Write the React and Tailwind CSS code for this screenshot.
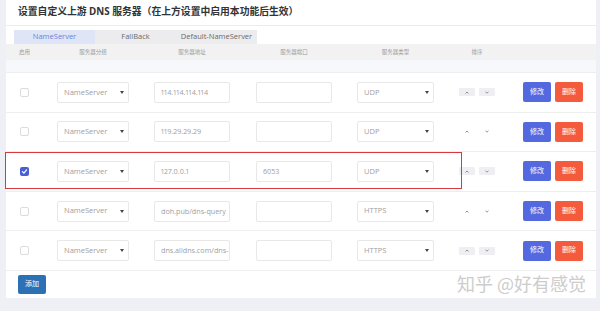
import React from "react";

const F = { fontFamily: '"Open Sans", "Noto Sans CJK SC", sans-serif' };

const rows = [
  { addr: "114.114.114.114", port: "", type: "UDP", checked: false, arrowBg: true },
  { addr: "119.29.29.29", port: "", type: "UDP", checked: false, arrowBg: false },
  { addr: "127.0.0.1", port: "6053", type: "UDP", checked: true, arrowBg: true, marked: true },
  { addr: "doh.pub/dns-query", port: "", type: "HTTPS", checked: false, arrowBg: false },
  { addr: "dns.alidns.com/dns-", port: "", type: "HTTPS", checked: false, arrowBg: true },
];

function Caret() {
  return (
    <span className="ml-auto mr-[4px] w-0 h-0 border-l-[2px] border-r-[2px] border-t-[3px] border-l-transparent border-r-transparent border-t-[#444]" />
  );
}

function Select({ text, w }) {
  return (
    <div className={`${w} h-[21px] border border-[#e8e8e8] rounded-[2px] bg-white flex items-center pl-[6px] text-[7.5px] text-[#a0a0a0] shrink-0`}>
      <span className="whitespace-nowrap">{text}</span>
      <Caret />
    </div>
  );
}

function Input({ text, w }) {
  return (
    <div className={`${w} h-[21px] border border-[#e8e8e8] rounded-[2px] bg-white flex items-center pl-[6px] text-[7.2px] text-[#a0a0a0] shrink-0 overflow-hidden proportional-nums`}>
      <span className="whitespace-nowrap">{text}</span>
    </div>
  );
}

function Checkbox({ checked }) {
  if (checked)
    return (
      <div className="w-[9px] h-[9px] rounded-[2px] bg-[#4a5fd6] flex items-center justify-center shrink-0">
        <svg width="7" height="7" viewBox="0 0 10 10">
          <path d="M2 5.2 L4.2 7.3 L8 2.8" stroke="white" strokeWidth="1.8" fill="none" strokeLinecap="round" strokeLinejoin="round" />
        </svg>
      </div>
    );
  return <div className="w-[9px] h-[9px] rounded-[2px] border border-[#dcdcdc] bg-white shrink-0" />;
}

function Arrow({ up, bg }) {
  return (
    <div className={`w-[16px] h-[8px] rounded-[1px] flex items-center justify-center shrink-0 ${bg ? "bg-[#efeff3]" : ""}`}>
      <svg width="4" height="3" viewBox="0 0 4 3">
        {up ? (
          <path d="M0.5 2.5 L2 1 L3.5 2.5" stroke="#777" strokeWidth="0.8" fill="none" />
        ) : (
          <path d="M0.5 0.8 L2 2.2 L3.5 0.8" stroke="#777" strokeWidth="0.8" fill="none" />
        )}
      </svg>
    </div>
  );
}

function Row({ r }) {
  return (
    <div className="relative h-[39.6px] border-b border-[#eeeeee] flex items-center pl-[14px]">
      <Checkbox checked={r.checked} />
      <div className="ml-[28px]">
        <Select text="NameServer" w="w-[72px]" />
      </div>
      <div className="ml-[25px]">
        <Input text={r.addr} w="w-[76px]" />
      </div>
      <div className="ml-[26px]">
        <Input text={r.port} w="w-[76px]" />
      </div>
      <div className="ml-[25px]">
        <Select text={r.type} w="w-[77px]" />
      </div>
      <div className="ml-[25px] flex gap-[4px]">
        <Arrow up bg={r.arrowBg} />
        <Arrow bg={r.arrowBg} />
      </div>
      <button className="ml-[28px] w-[28px] h-[20px] rounded-[2px] bg-[#5468df] text-white text-[7px] flex items-center justify-center">修改</button>
      <button className="ml-[4px] w-[28px] h-[20px] rounded-[2px] bg-[#f45b3c] text-white text-[7px] flex items-center justify-center">删除</button>
      {r.marked && (
        <div className="absolute left-[-1px] top-0 w-[457px] h-[37px] border-[1.5px] border-[#d9383c] pointer-events-none" />
      )}
    </div>
  );
}

function HCell({ w, ml, children }) {
  return (
    <div className={`${w} ${ml} flex justify-center shrink-0 whitespace-nowrap`}>{children}</div>
  );
}

export default function App() {
  return (
    <div className="w-[600px] h-[311px] bg-[#eef0f5] overflow-hidden" style={F}>
      <div className="relative ml-[6px] w-[590px] h-[298px] bg-white">
        <div className="h-[26px] border-b border-[#ececec] flex items-center pl-[12px]">
          <span className="text-[9.8px] font-bold text-[#333] whitespace-nowrap">
            设置自定义上游 DNS 服务器（在上方设置中启用本功能后生效）
          </span>
        </div>
        <div className="pt-[4px] pl-[8px] flex">
          <div className="w-[81px] h-[14px] bg-[#dfe5f6] text-[#6b84d8] text-[7.5px] flex items-center justify-center">NameServer</div>
          <div className="w-[81px] h-[14px] bg-[#ececef] text-[#6a6a6a] text-[7.5px] flex items-center justify-center">FallBack</div>
          <div className="w-[81px] h-[14px] bg-[#ececef] text-[#6a6a6a] text-[7.5px] flex items-center justify-center">Default-NameServer</div>
        </div>
        <div className="h-[16px] bg-[#f2f2f3] flex items-center pl-[14px] text-[5.5px] text-[#9a9a9a]">
          <HCell w="w-[9px]" ml="">启用</HCell>
          <HCell w="w-[72px]" ml="ml-[28px]">服务器分组</HCell>
          <HCell w="w-[76px]" ml="ml-[25px]">服务器地址</HCell>
          <HCell w="w-[76px]" ml="ml-[26px]">服务器端口</HCell>
          <HCell w="w-[77px]" ml="ml-[25px]">服务器类型</HCell>
          <HCell w="w-[36px]" ml="ml-[25px]">排序</HCell>
        </div>
        <div className="h-[13px] bg-[#f6f8fc] border-b border-[#eeeeee]" />
        {rows.map((r, i) => (
          <Row key={i} r={r} />
        ))}
        <div className="pl-[12px] pt-[4px]">
          <button className="w-[28px] h-[19px] rounded-[2px] bg-[#2c71b6] text-white text-[7px] flex items-center justify-center">添加</button>
        </div>
        <div className="absolute right-[10px] bottom-[1px] text-[18px] text-[#cdcdcd] whitespace-nowrap" style={{ fontFamily: '"Noto Sans CJK SC", sans-serif' }}>
          知乎 @好有感觉
        </div>
      </div>
    </div>
  );
}
